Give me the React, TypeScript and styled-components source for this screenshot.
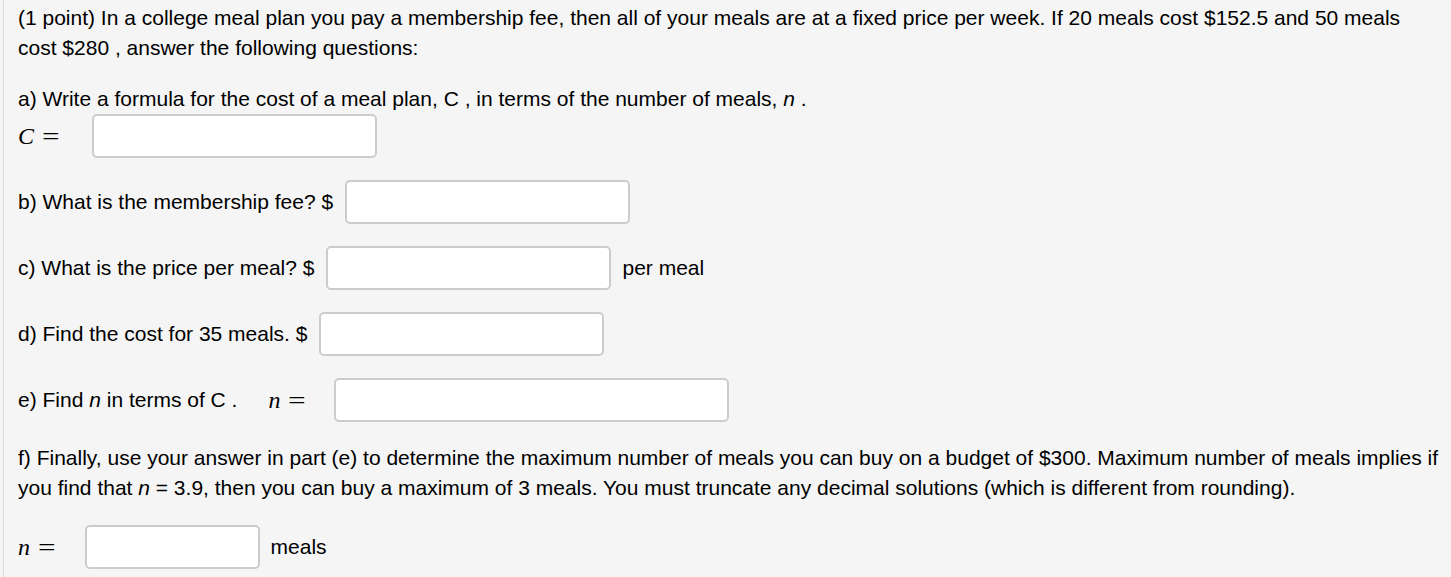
import React, { FC } from 'react';
import styled, { createGlobalStyle } from 'styled-components';

const GlobalStyle = createGlobalStyle`
  html, body {
    margin: 0;
    padding: 0;
    background-color: #f5f5f5;
  }
  body {
    font-family: "Liberation Sans", Arial, sans-serif;
    color: #000;
  }
`;

const Page = styled.div`
  padding-left: 3px;
  min-height: 577px;
  background-color: #f5f5f5;
`;

const Problem = styled.div`
  border-left: 1px solid #dcdcdc;
  padding: 3px 0 0 14px;
  min-height: 574px;
  font-size: 21px;
  line-height: 30px;
`;

const Para = styled.p<{ $gap?: number }>`
  margin: 0 0 ${(p) => p.$gap ?? 21}px 0;
  white-space: nowrap;
`;

const Line = styled.div`
  margin: 0;
  white-space: nowrap;
`;

const Row = styled.div<{ $gap?: number; $top?: number }>`
  display: flex;
  align-items: center;
  height: 44px;
  margin-top: ${(p) => p.$top ?? 0}px;
  margin-bottom: ${(p) => p.$gap ?? 22}px;
`;

const Label = styled.span<{ $space?: number }>`
  margin-right: ${(p) => p.$space ?? 12}px;
  white-space: pre;
`;

const Answer = styled.input<{ $w: number }>`
  box-sizing: border-box;
  width: ${(p) => p.$w}px;
  height: 44px;
  border: 2px solid #cccccc;
  border-radius: 5px;
  background: #fff;
  outline: none;
  padding: 0 10px;
  font-size: 18px;
  font-family: inherit;
`;

const After = styled.span`
  margin-left: 11px;
`;

const Equation = styled.span<{ $before?: number; $after?: number }>`
  display: inline-flex;
  align-items: baseline;
  font-family: "Liberation Serif", "Times New Roman", serif;
  font-size: 24px;
  margin-left: ${(p) => p.$before ?? 0}px;
  margin-right: ${(p) => p.$after ?? 0}px;
`;

const MathVar = styled.i`
  font-style: italic;
`;

const Rel = styled.span`
  margin-left: 10px;
  transform: scaleX(1.3);
  display: inline-block;
`;

const Var = styled.i`
  font-style: italic;
`;

const App: FC = () => {
  return (
    <Page>
      <GlobalStyle />
      <Problem>
        <Para>
          (1 point) In a college meal plan you pay a membership fee, then all of your meals are at a fixed
          price per week. If 20 meals cost $152.5 and 50 meals
          <br />
          cost $280 , answer the following questions:
        </Para>

        <Line>
          a) Write a formula for the cost of a meal plan, C , in terms of the number of meals, <Var>n</Var> .
        </Line>
        <Row>
          <Equation $after={34}>
            <MathVar>C</MathVar>
            <Rel>=</Rel>
          </Equation>
          <Answer $w={285} />
        </Row>

        <Row>
          <Label>b) What is the membership fee? $</Label>
          <Answer $w={285} />
        </Row>

        <Row>
          <Label>c) What is the price per meal? $</Label>
          <Answer $w={285} />
          <After>per meal</After>
        </Row>

        <Row>
          <Label>d) Find the cost for 35 meals. $</Label>
          <Answer $w={285} />
        </Row>

        <Row $gap={21}>
          <Label $space={0}>
            e) Find <Var>n</Var> in terms of C .
          </Label>
          <Equation $before={31} $after={30}>
            <MathVar>n</MathVar>
            <Rel>=</Rel>
          </Equation>
          <Answer $w={395} />
        </Row>

        <Para $gap={22}>
          f) Finally, use your answer in part (e) to determine the maximum number of meals you can buy on a
          budget of $300. Maximum number of meals implies if
          <br />
          you find that <Var>n</Var> = 3.9, then you can buy a maximum of 3 meals. You must truncate any
          decimal solutions (which is different from rounding).
        </Para>

        <Row>
          <Equation $after={31}>
            <MathVar>n</MathVar>
            <Rel>=</Rel>
          </Equation>
          <Answer $w={175} />
          <After>meals</After>
        </Row>
      </Problem>
    </Page>
  );
};

export default App;
